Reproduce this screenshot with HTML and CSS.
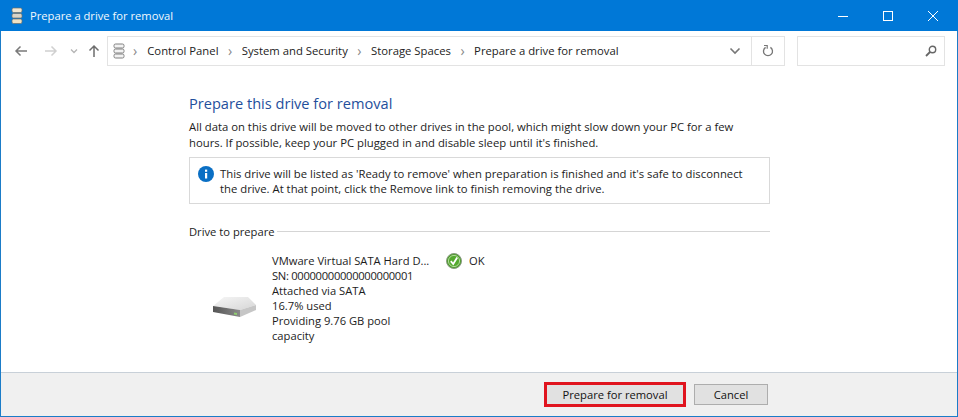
FILE: index.html
```html
<!DOCTYPE html>
<html lang="en">
<head>
<meta charset="utf-8">
<title>Prepare a drive for removal</title>
<link rel="stylesheet" href="styles.css">
</head>
<body>
<div class="window">
  <header class="titlebar">
    <svg class="app-icon" width="16" height="18" viewBox="0 0 16 18">
      <rect x="3" y="1" width="10" height="4.500" rx="1.500" fill="#f0e6d2" stroke="#6f6f66" stroke-width=".7"/>
      <rect x="3" y="6.500" width="10" height="4.500" rx="1.500" fill="#d8d4c8" stroke="#6f6f66" stroke-width=".7"/>
      <rect x="3" y="12" width="10" height="4.500" rx="1.500" fill="#f0e2c4" stroke="#6f6f66" stroke-width=".7"/>
    </svg>
    <span class="title">Prepare a drive for removal</span>
    <div class="caption">
      <svg width="12" height="12" viewBox="0 0 12 12"><path d="M1 6.500h10" stroke="#fff" fill="none"/></svg>
      <svg width="12" height="12" viewBox="0 0 12 12"><rect x="1.500" y="1.500" width="9" height="9" stroke="#fff" fill="none"/></svg>
      <svg width="12" height="12" viewBox="0 0 12 12"><path d="M1 1l10 10M11 1L1 11" stroke="#fff" fill="none"/></svg>
    </div>
  </header>
  <nav class="navbar">
    <div class="nav-buttons">
      <svg width="14" height="12" viewBox="0 0 14 12"><path d="M13 6H2M6.500 1.500L2 6l4.500 4.500" stroke="#7a7a7a" stroke-width="1.500" fill="none"/></svg>
      <svg width="14" height="12" viewBox="0 0 14 12"><path d="M1 6h11M7.500 1.500L12 6l-4.500 4.500" stroke="#d0d0d0" stroke-width="1.500" fill="none"/></svg>
      <svg width="8" height="6" viewBox="0 0 8 6"><path d="M1 1.500l3 3 3-3" stroke="#b5b5b5" stroke-width="1.300" fill="none"/></svg>
      <svg width="12" height="14" viewBox="0 0 12 14"><path d="M6 13V2M1.500 6.500L6 2l4.500 4.500" stroke="#6e6e6e" stroke-width="1.500" fill="none"/></svg>
    </div>
    <div class="address">
      <svg class="addr-icon" width="12" height="16" viewBox="0 0 12 16">
        <rect x="1" y="1" width="10" height="4" rx="1.500" fill="#f2f2f2" stroke="#808080"/>
        <rect x="1" y="6" width="10" height="4" rx="1.500" fill="#f2f2f2" stroke="#808080"/>
        <rect x="1" y="11" width="10" height="4" rx="1.500" fill="#f2f2f2" stroke="#808080"/>
      </svg>
      <div class="crumbs">
        <span class="sep">›</span><span>Control Panel</span>
        <span class="sep">›</span><span>System and Security</span>
        <span class="sep">›</span><span>Storage Spaces</span>
        <span class="sep">›</span><span>Prepare a drive for removal</span>
      </div>
      <svg class="addr-chevron" width="12" height="8" viewBox="0 0 12 8"><path d="M1.500 1.500L6 6l4.500-4.500" stroke="#777" stroke-width="1.600" fill="none"/></svg>
      <div class="refresh">
        <svg width="12" height="14" viewBox="0 0 12 14"><path d="M3.600 3.400a4.500 4.500 0 1 0 4.800 0" stroke="#777" stroke-width="1.300" fill="none"/><path d="M2 1.500h3.200v3.200" stroke="#777" stroke-width="1.200" fill="none"/></svg>
      </div>
    </div>
    <div class="search">
      <svg width="12" height="12" viewBox="0 0 12 12"><circle cx="7.500" cy="4.500" r="3.200" stroke="#666" stroke-width="1.400" fill="none"/><path d="M5 7l-4 4" stroke="#666" stroke-width="1.800"/></svg>
    </div>
  </nav>
  <main class="content">
    <h1 class="heading">Prepare this drive for removal</h1>
    <p class="desc">All data on this drive will be moved to other drives in the pool, which might slow down your PC for a few hours. If possible, keep your PC plugged in and disable sleep until it's finished.</p>
    <div class="notice">
      <svg class="notice-icon" width="16" height="16" viewBox="0 0 16 16">
        <circle cx="8" cy="8" r="8" fill="#0a6fc4"/>
        <rect x="7" y="7" width="2.200" height="5.500" fill="#fff"/>
        <rect x="7" y="3.600" width="2.200" height="2.200" fill="#fff"/>
      </svg>
      <p>This drive will be listed as 'Ready to remove' when preparation is finished and it's safe to disconnect the drive. At that point, click the Remove link to finish removing the drive.</p>
    </div>
    <div class="group-head"><span>Drive to prepare</span><i></i></div>
    <section class="drive">
      <div class="drive-icon">
        <svg width="43" height="20" viewBox="0 0 43 20">
          <defs>
            <linearGradient id="top" x1="0" y1="0" x2="1" y2="1"><stop offset="0" stop-color="#f6f6f6"/><stop offset="1" stop-color="#d6d6d6"/></linearGradient>
            <linearGradient id="front" x1="0" y1="0" x2="1" y2="0"><stop offset="0" stop-color="#555"/><stop offset="1" stop-color="#8a8a8a"/></linearGradient>
          </defs>
          <polygon points="11,0 35,0 43,8 27,13 0,9" fill="url(#top)"/>
          <polygon points="0,9 27,13 27,20 0,15" fill="url(#front)"/>
          <polygon points="27,13 43,8 43,13 27,20" fill="#c6c6c6"/>
          <polygon points="21,15.500 24,16 24,18 21,17.500" fill="#8fcf6f"/>
        </svg>
      </div>
      <div class="drive-info">
        <div>VMware Virtual SATA Hard D...</div>
        <div class="serial">SN: 00000000000000000001</div>
        <div>Attached via SATA</div>
        <div>16.7% used</div>
        <div>Providing 9.76 GB pool<br>capacity</div>
      </div>
      <div class="drive-status">
        <svg width="16" height="16" viewBox="0 0 16 16">
          <circle cx="8" cy="8" r="7.500" fill="#4f9e2c" stroke="#8a9a84"/>
          <circle cx="8" cy="8" r="5.600" fill="#54a92f" stroke="#c9e6b8" stroke-width=".8"/>
          <path d="M4.800 8.200L7.200 11l4-6.500" stroke="#fff" stroke-width="1.800" fill="none"/>
        </svg>
        <span>OK</span>
      </div>
    </section>
  </main>
  <footer class="footer">
    <button class="btn btn-primary">Prepare for removal</button>
    <button class="btn">Cancel</button>
  </footer>
</div>
</body>
</html>
```

FILE: styles.css
```css
html, body { margin: 0; padding: 0; }
body { width: 958px; height: 417px; overflow: hidden; background: #fff; font-family: "Open Sans", "Noto Sans", sans-serif; font-size: 11.2px; color: #1c1c1c; }
.window { box-sizing: border-box; width: 958px; height: 417px; border: 1px solid #1b7cc8; border-top: 0; display: flex; flex-direction: column; background: #fff; }
.titlebar { height: 31px; flex: none; background: #0078d7; color: #fff; display: flex; align-items: center; padding-left: 9px; margin: 0 -1px; }
.app-icon { margin-right: 5px; }
.title { font-size: 11.2px; color: #f2f8fd; }
.caption { margin-left: auto; display: flex; gap: 33px; padding-right: 19px; }
.navbar { height: 39px; flex: none; display: flex; align-items: center; }
.nav-buttons { width: 106px; display: flex; align-items: center; box-sizing: border-box; padding-left: 13px; }
.nav-buttons svg:nth-child(2) { margin-left: 16px; }
.nav-buttons svg:nth-child(3) { margin-left: 12px; }
.nav-buttons svg:nth-child(4) { margin-left: 10px; }
.address { width: 678px; height: 30px; box-sizing: border-box; border: 1px solid #e3e3e3; display: flex; align-items: center; }
.addr-icon { margin-left: 5px; flex: none; }
.crumbs { display: flex; align-items: center; flex: 1; font-size: 11.3px; white-space: nowrap; color: #222; }
.sep { color: #888; font-size: 14px; line-height: 14px; margin: 0 10px 0 8px; }
.crumbs span:not(.sep) + .sep { margin-left: 9.500px; margin-right: 9.500px; }
.addr-chevron { margin-right: 10px; }
.refresh { width: 32px; height: 100%; border-left: 1px solid #e3e3e3; display: flex; align-items: center; justify-content: center; }
.search { width: 148px; height: 30px; box-sizing: border-box; margin-left: 12px; border: 1px solid #e3e3e3; display: flex; align-items: center; justify-content: flex-end; padding-right: 7px; }
.content { flex: 1; padding: 23px 0 0 188px; }
.heading { margin: 0; font-size: 14.600px; font-weight: 400; line-height: 20px; color: #1f4f9c; }
.desc { margin: 6px 0 0; width: 560px; line-height: 16px; font-size: 11.300px; }
.notice { box-sizing: border-box; width: 581px; height: 47px; margin-top: 6px; border: 1px solid #d9d9d9; display: flex; align-items: center; padding-left: 8px; }
.notice-icon { flex: none; margin-right: 6px; margin-top: -13px; }
.notice p { margin: 0; width: 530px; line-height: 15px; font-size: 11.300px; }
.group-head { width: 581px; display: flex; align-items: center; margin-top: 19px; height: 16px; }
.group-head i { flex: 1; height: 1px; background: #d5d5d5; margin-left: 2px; }
.drive { display: flex; margin-top: 14px; }
.drive-icon { width: 83px; flex: none; padding: 44px 0 0 24px; box-sizing: border-box; }
.drive-info { width: 174px; line-height: 15px; }
.serial { letter-spacing: -0.300px; }
.drive-status { display: flex; align-items: flex-start; gap: 7px; height: 16px; line-height: 15px; }
.footer { height: 43px; flex: none; background: #f0f0f0; border-top: 1px solid #c8d0d8; display: flex; align-items: center; justify-content: flex-end; gap: 8px; padding-right: 189px; }
.btn { font: inherit; color: #111; height: 21px; width: 74px; padding: 0; background: #e1e1e1; border: 1px solid #adadad; }
.btn-primary { box-sizing: content-box; width: 136px; height: 19px; border: 3px solid #e0141e; }
```
